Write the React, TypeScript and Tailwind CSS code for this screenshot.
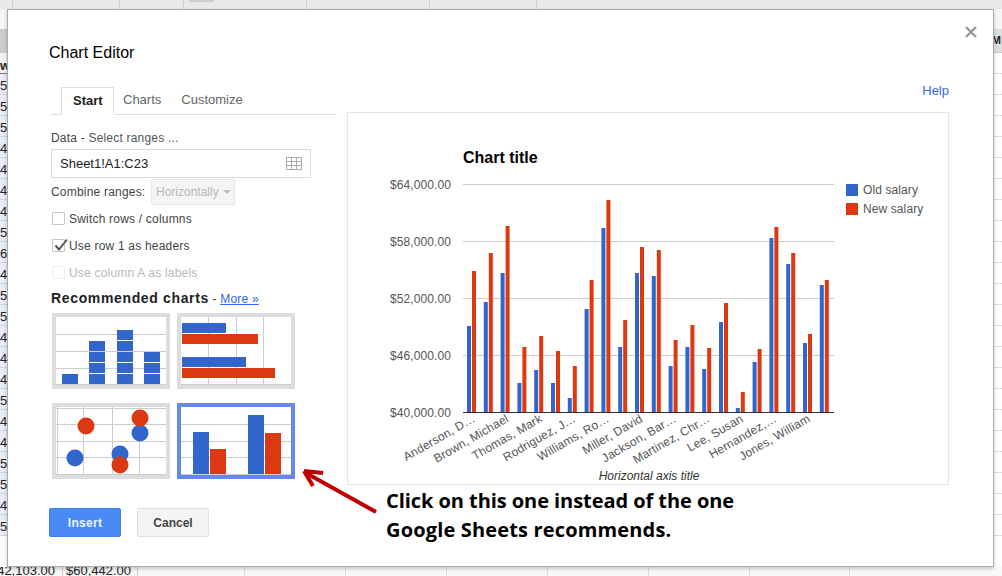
const OLD = '#3366cc';
const NEW = '#dc3912';

// plot values read off the screenshot, in px height above the axis
const BARS: [number, number][] = [
  [86, 141], [110, 159], [139, 186], [29, 65], [42, 76], [29, 61], [14, 46], [103, 132], [184, 212],
  [65, 92], [139, 165], [136, 162], [46, 72], [65, 87], [43, 64], [90, 109], [4, 20],
  [50, 63], [174, 185], [148, 159], [69, 78], [127, 132],
];

const NAMES = [
  'Anderson, D…', 'Brown, Michael', 'Thomas, Mark', 'Rodriguez, J…', 'Williams, Ro…', 'Miller, David',
  'Jackson, Bar…', 'Martinez, Chr…', 'Lee, Susan', 'Hernandez,…', 'Jones, William',
];

function Chart() {
  return (
    <svg width="600" height="371" viewBox="348 113 600 371" className="block" fontFamily="'Liberation Sans', Arial, sans-serif">
      <text x="463" y="163" fontSize="16" fontWeight="700" fill="#000">Chart title</text>
      {[184, 241, 298, 355].map((y) => (
        <line key={y} x1="463" x2="834" y1={y + 0.5} y2={y + 0.5} stroke="#cccccc" />
      ))}
      {['$64,000.00', '$58,000.00', '$52,000.00', '$46,000.00', '$40,000.00'].map((t, i) => (
        <text key={t} x="451" y={189 + i * 57} textAnchor="end" fontSize="12" letterSpacing="0.1" fill="#555">{t}</text>
      ))}
      {BARS.map(([a, b], i) => {
        const x = 467 + i * 16.8;
        return (
          <g key={i}>
            <rect x={x} y={412 - a} width="4" height={a} fill={OLD} />
            <rect x={x + 5} y={412 - b} width="4" height={b} fill={NEW} />
          </g>
        );
      })}
      <line x1="463" x2="834" y1="412.5" y2="412.5" stroke="#333" />
      {NAMES.map((n, i) => (
        <text
          key={n}
          transform={`translate(${476 + i * 33.5} 421) rotate(-30)`}
          textAnchor="end"
          fontSize="12"
          letterSpacing="0.15"
          fill="#555"
        >
          {n}
        </text>
      ))}
      <text x="649" y="480" textAnchor="middle" fontSize="12" fontStyle="italic" fill="#333">Horizontal axis title</text>
      <rect x="846" y="184" width="12" height="12" fill={OLD} />
      <text x="863" y="194" fontSize="12" letterSpacing="0.1" fill="#555">Old salary</text>
      <rect x="846" y="203" width="12" height="12" fill={NEW} />
      <text x="863" y="213" fontSize="12" letterSpacing="0.1" fill="#555">New salary</text>
    </svg>
  );
}

function Thumb({ selected, children }: { selected?: boolean; children: React.ReactNode }) {
  return (
    <div className={`h-[76px] w-[118px] border-[4px] bg-white ${selected ? 'border-[#6688ee]' : 'border-[#dddddd]'}`}>
      <svg width="110" height="68" viewBox="1 1 110 68" className="block">
        {children}
      </svg>
    </div>
  );
}

const Grid = ({ v = [] as number[], h = [] as number[] }) => (
  <g stroke="#cccccc" strokeWidth="1">
    {v.map((x) => <line key={x} x1={x + 0.5} x2={x + 0.5} y1="0" y2="70" />)}
    {h.map((y) => <line key={y} x1="0" x2="112" y1={y + 0.5} y2={y + 0.5} />)}
  </g>
);

function Check({ checked, disabled, label }: { checked?: boolean; disabled?: boolean; label: string }) {
  return (
    <label className={`flex h-[27px] items-center gap-[4px] pl-[1px] ${disabled ? 'text-[#b8b8b8]' : 'text-[#444444]'}`}>
      <span className={`relative h-[13px] w-[13px] rounded-[1px] border ${disabled ? 'border-[#eeeeee]' : 'border-[#c6c6c6]'}`}>
        {checked && (
          <svg viewBox="0 0 16 16" className="absolute -top-[3px] left-0 h-4 w-4">
            <path d="M2.5 8.5 6 12.5 14 2.5" fill="none" stroke="#555" strokeWidth="2" />
          </svg>
        )}
      </span>
      {label}
    </label>
  );
}

function Sheet() {
  const rows = ['5!', '5(', '5!', '4(', '4!', '4(', '4(', '5(', '6:', '4!', '5!', '5!', '4!', '4!', '4(', '5!', '4:', '4(', '5!', '5(', '4!', '5('];
  return (
    <div className="absolute inset-0 flex flex-col overflow-hidden bg-white text-[13px] text-[#222222]">
      <div className="relative flex h-[9px] shrink-0 bg-[#e8e8e8]">
        {[13, 107, 64, 123, 123, 107].map((w, i) => (
          <div key={i} className="border-r border-[#d0d0d0]" style={{ width: w }} />
        ))}
        <div className="absolute left-[189px] top-0 h-[2px] w-[25px] bg-[#cccccc]" />
      </div>
      <div className="h-[20px] shrink-0 bg-[#f6f6f6]" />
      <div className="flex h-[24px] shrink-0 border-b border-[#cccccc] bg-[#dedede]">
        <div className="w-[7px] bg-[#cccccc]" />
        <div className="flex flex-1 items-center justify-end pr-[1px] text-[11px] font-bold">M</div>
      </div>
      <div className="flex h-[21px] shrink-0">
        <div className="flex w-[7px] items-end overflow-hidden border-b border-[#777777] bg-[#f2f2f2] font-bold leading-[15px]">w</div>
        <div className="flex-1 border-b border-[#dddddd]" />
      </div>
      {rows.map((r, i) => (
        <div key={i} className="flex h-[21px] shrink-0">
          <div className="w-[7px] overflow-hidden whitespace-nowrap border-b border-[#ccd4e6] bg-[#e8edf8] pt-[4px] leading-[15px]">{r}</div>
          <div className="flex-1 border-b border-[#dddddd]" />
        </div>
      ))}
    </div>
  );
}

export default function App() {
  return (
    <div className="relative h-[576px] w-[1002px] overflow-hidden font-['Liberation_Sans',Arial,sans-serif]">
      <Sheet />
      {/* bottom strip of the sheet, below the dialog */}
      <div className="absolute inset-x-0 bottom-0 flex h-[9px] overflow-hidden bg-[#f8f8f8] text-[13px] leading-[8px] text-[#222222]">
        <div className="flex w-[63px] justify-end whitespace-nowrap border-r border-[#cccccc] pr-[7px]">42,103.00</div>
        <div className="w-[75px] whitespace-nowrap border-r border-[#cccccc] pl-[3px]">$60,442.00</div>
        <div className="w-[107px] border-r border-[#dddddd]" />
        <div className="w-[101px] border-r border-[#dddddd]" />
        <div className="w-[101px] border-r border-[#dddddd]" />
        <div className="w-[101px] border-r border-[#dddddd]" />
        <div className="w-[101px] border-r border-[#dddddd]" />
        <div className="w-[101px] border-r border-[#dddddd]" />
        <div className="w-[100px] border-r border-[#dddddd]" />
      </div>

      <div className="absolute left-[7px] top-[9px] h-[558px] w-[987px] border border-[#acacac] bg-white shadow-[0_2px_4px_rgba(0,0,0,0.2)]">
        <div className="flex h-full flex-col pl-[43px] pt-[33px]">
          <h1 className="-ml-[2px] text-base leading-5 text-black">Chart Editor</h1>

          <div className="mt-[23px] flex flex-1 gap-[10px]">
            <div className="w-[286px] text-[12px] tracking-[0.2px]">
              <div className="flex h-[29px] items-end border-b border-[#dddddd] pl-[10px] text-[13px] tracking-normal text-[#666666]">
                <div className="-mb-px flex h-[28px] w-[53px] items-center border border-b-white border-[#dddddd] pl-[11px] font-bold text-[#222222]">Start</div>
                <div className="flex h-[28px] items-center pl-[9px] pr-[10px]">Charts</div>
                <div className="flex h-[28px] items-center px-[10px]">Customize</div>
              </div>

              <div className="mt-[16px] h-[15px] leading-[15px] text-[#444444]">
                Data - <span className="text-[#555555]">Select ranges ...</span>
              </div>
              <div className="mt-[3px] flex h-[29px] w-[260px] items-center justify-between border border-[#d9d9d9] pl-2 pr-2 text-[13px] tracking-normal text-[#222222]">
                Sheet1!A1:C23
                <svg width="16" height="13" viewBox="0 0 16 13" fill="none" stroke="#aaaaaa">
                  <path d="M.5.5h15v12H.5zM.5 4.5h15M.5 8.5h15M5.5.5v12M10.5.5v12" />
                </svg>
              </div>
              <div className="mt-[1px] flex h-[26px] items-center text-[#444444]">
                <span className="w-[100px]">Combine ranges:</span>
                <div className="flex h-[26px] w-[84px] items-center rounded-[2px] border border-[#e5e5e5] bg-[#f4f4f4] pl-[4px] tracking-normal text-[#b8b8b8]">
                  Horizontally
                  <span className="ml-[4px] h-0 w-0 border-x-[4px] border-t-[4px] border-x-transparent border-t-[#c0c0c0]" />
                </div>
              </div>
              <div>
                <Check label="Switch rows / columns" />
                <Check checked label="Use row 1 as headers" />
                <Check disabled label="Use column A as labels" />
              </div>

              <div className="mt-[3px] leading-[18px] text-[#444444]">
                <span className="text-[14px] font-bold tracking-[0.65px] text-[#222222]">Recommended charts</span>
                {' - '}
                <span className="text-[#3366ee] underline">More »</span>
              </div>

              <div className="mt-[5px] grid w-[244px] grid-cols-[118px_118px] gap-x-[7px] gap-y-[14px] pl-[1px]">
                <Thumb>
                  <Grid h={[18, 35, 52, 68]} />
                  {[[7, 1], [34, 4], [62, 5], [89, 3]].map(([x, n]) =>
                    Array.from({ length: n }).map((_, i) => (
                      <rect key={`${x}-${i}`} x={x} y={58 - i * 11} width="16" height="10" fill={OLD} />
                    )),
                  )}
                </Thumb>
                <Thumb>
                  <Grid v={[28, 56, 83]} />
                  <rect x="2" y="7" width="44" height="10" fill={OLD} />
                  <rect x="2" y="18" width="76" height="10" fill={NEW} />
                  <rect x="2" y="41" width="64" height="10" fill={OLD} />
                  <rect x="2" y="52" width="93" height="10" fill={NEW} />
                  <rect x="1" y="68" width="110" height="1" fill="#cccccc" />
                </Thumb>
                <Thumb>
                  <Grid v={[2, 28, 57, 84, 111]} h={[2, 18, 35, 51, 68]} />
                  <circle cx="31" cy="20" r="8.5" fill={NEW} />
                  <circle cx="20" cy="52" r="8.5" fill={OLD} />
                  <circle cx="85" cy="27" r="8.5" fill={OLD} />
                  <circle cx="85" cy="12" r="8.5" fill={NEW} />
                  <circle cx="65" cy="48" r="8.5" fill={OLD} />
                  <circle cx="65" cy="59" r="8.5" fill={NEW} />
                </Thumb>
                <Thumb selected>
                  <Grid h={[18, 35, 51]} />
                  <rect x="13" y="26" width="16" height="42" fill={OLD} />
                  <rect x="30" y="43" width="16" height="25" fill={NEW} />
                  <rect x="68" y="9" width="16" height="59" fill={OLD} />
                  <rect x="85" y="27" width="16" height="41" fill={NEW} />
                  <rect x="1" y="68" width="110" height="1" fill="#cccccc" />
                </Thumb>
              </div>

              <div className="-ml-[2px] mt-[29px] flex gap-[16px] text-[12px] font-bold tracking-normal">
                <div className="flex h-[29px] w-[72px] items-center justify-center rounded-[2px] border border-[#3b80ee] bg-[#4a8af4] tracking-[0.3px] text-[#eef3ff]">Insert</div>
                <div className="flex h-[29px] w-[72px] items-center justify-center rounded-[2px] border border-[#e0e0e0] bg-[#f4f4f4] text-[#444444]">Cancel</div>
              </div>
            </div>

            <div className="flex w-[602px] flex-col">
              <div className="-mt-[5px] h-[31px] text-right text-[13px] text-[#3366ee]">Help</div>
              <div className="h-[373px] w-[602px] border border-[#e5e5e5]">
                <Chart />
              </div>
            </div>
          </div>
        </div>

        <svg viewBox="0 0 12 12" className="absolute right-[16px] top-[16px] h-3 w-3" stroke="#999999" strokeWidth="2.4">
          <path d="M1 1 11 11M11 1 1 11" />
        </svg>

        {/* annotation added over the dialog */}
        <svg className="absolute left-[293px] top-[455px]" width="90" height="50" viewBox="0 0 90 50" fill="none" stroke="#c00000" strokeWidth="4">
          <path d="M5 8 75 47M3 6 22 8M3 6 12 21" />
        </svg>
        <div className="absolute left-[378px] top-[476px] font-['Open_Sans',sans-serif] text-[20px] font-bold leading-[29px] text-black">
          <span className="tracking-[-0.06px]">Click on this one instead of the one</span>
          <br />
          <span className="tracking-[0.16px]">Google Sheets recommends.</span>
        </div>
      </div>
    </div>
  );
}
